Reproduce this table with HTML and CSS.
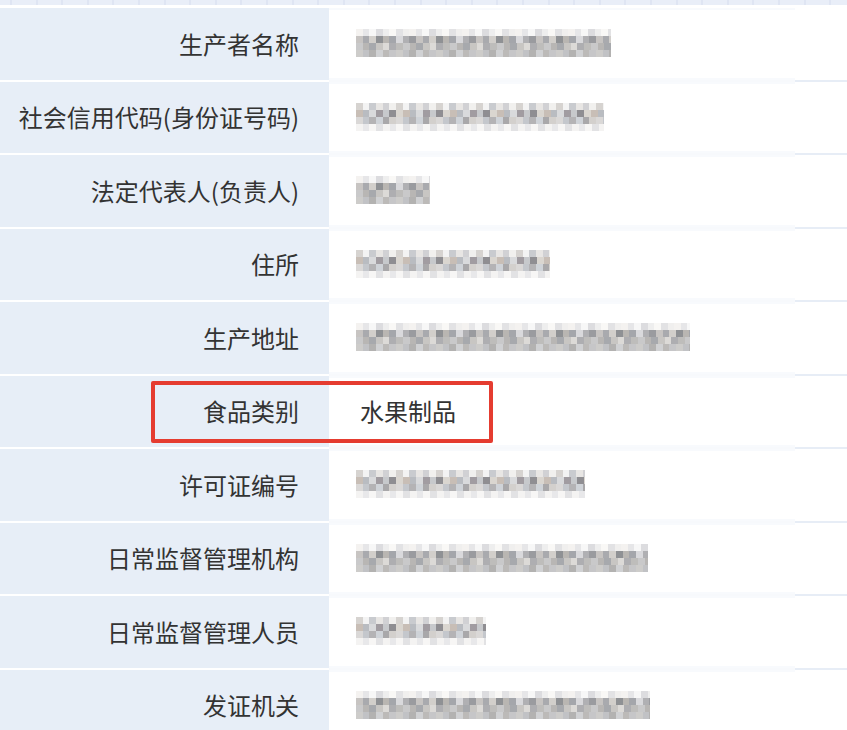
FILE: index.html
```html
<!DOCTYPE html>
<html lang="zh-CN">
<head>
<meta charset="utf-8">
<title>生产者信息</title>
<link rel="stylesheet" href="styles.css">
</head>
<body>
<div class="top-strip"></div>
<div class="info-table">
  <div class="row">
    <div class="label">生产者名称</div>
    <div class="value"><span class="mosaic" style="width:255px"></span></div>
  </div>
  <div class="row">
    <div class="label">社会信用代码(身份证号码)</div>
    <div class="value"><span class="mosaic alt" style="width:248px"></span></div>
  </div>
  <div class="row">
    <div class="label">法定代表人(负责人)</div>
    <div class="value"><span class="mosaic" style="width:74px"></span></div>
  </div>
  <div class="row">
    <div class="label">住所</div>
    <div class="value"><span class="mosaic alt" style="width:194px"></span></div>
  </div>
  <div class="row">
    <div class="label">生产地址</div>
    <div class="value"><span class="mosaic" style="width:334px"></span></div>
  </div>
  <div class="row highlight">
    <div class="label">食品类别</div>
    <div class="value"><span class="text">水果制品</span></div>
    <div class="mark"></div>
  </div>
  <div class="row">
    <div class="label">许可证编号</div>
    <div class="value"><span class="mosaic alt" style="width:229px"></span></div>
  </div>
  <div class="row">
    <div class="label">日常监督管理机构</div>
    <div class="value"><span class="mosaic" style="width:292px"></span></div>
  </div>
  <div class="row">
    <div class="label">日常监督管理人员</div>
    <div class="value"><span class="mosaic alt" style="width:130px"></span></div>
  </div>
  <div class="row">
    <div class="label">发证机关</div>
    <div class="value"><span class="mosaic" style="width:294px"></span></div>
  </div>
</div>
</body>
</html>
```

FILE: styles.css
```css
html, body {
  margin: 0;
  padding: 0;
  background: #ffffff;
}

body {
  width: 847px;
  overflow: hidden;
  font-family: "Noto Sans CJK SC", "Noto Sans", sans-serif;
  color: #333333;
}

.top-strip {
  height: 5px;
  margin-bottom: 3px;
  background:
    repeating-linear-gradient(to right, #e9eef8 0 10px, #dfe5f3 10px 12px, #e9eef8 12px 25.6px);
}

.info-table {
  display: flex;
  flex-direction: column;
  gap: 2px;
  background: linear-gradient(to right, #ffffff 0 329px, #f7f9fc 329px 795px, #e7edf6 795px);
}

.row {
  position: relative;
  display: grid;
  grid-template-columns: 329px 1fr;
  height: 71.5px;
  flex: none;
}

.label {
  display: flex;
  align-items: center;
  justify-content: flex-end;
  padding-right: 30px;
  background: #e7eef7;
  font-size: 24px;
  line-height: 1;
  white-space: nowrap;
}

.value {
  display: flex;
  align-items: center;
  padding-left: 27px;
  background:
    linear-gradient(#f8fafd, #f8fafd) left top / 466px 2px no-repeat,
    linear-gradient(#f8fafd, #f8fafd) left bottom / 466px 2px no-repeat,
    #ffffff;
}

.value .text {
  padding-left: 4px;
  font-size: 24px;
  line-height: 1;
  color: #333333;
}

/* pixelated (redacted) value: four rows of 7px blocks */
.mosaic {
  display: block;
  height: 28px;
  margin-top: -1px;
  background:
    repeating-linear-gradient(to right, #f4f2f0 0 7px, #e6e6e8 7px 13px, #f7f7f7 13px 20px, #dcdcdf 20px 27px, #eeeeee 27px 33px, #f9f8f6 33px 40px, #e2e2e4 40px 47px, #f0efee 47px 53px) 0 0 / 100% 7px no-repeat,
    repeating-linear-gradient(to right, #c7c4c2 0 7px, #a9aaae 7px 13px, #d2cfcb 13px 20px, #8f9194 20px 27px, #b9b6b2 27px 33px, #a4a6ab 33px 40px, #d9d9dc 40px 47px, #b0b0b3 47px 53px, #9a9b9f 53px 60px) 0 7px / 100% 7px no-repeat,
    repeating-linear-gradient(to right, #c9c9ca 0 7px, #b8b6b4 7px 13px, #a7a9ad 13px 20px, #c8c6c3 20px 27px, #dcdad7 27px 33px, #aeaeb1 33px 40px, #bebdbb 40px 47px) 0 14px / 100% 7px no-repeat,
    repeating-linear-gradient(to right, #cdccca 0 7px, #c1c2c5 7px 13px, #b3b2b1 13px 20px, #d0d1d3 20px 27px, #bcbab8 27px 33px, #c6c6c8 33px 40px) 0 21px / 100% 7px no-repeat;
}

.mosaic.alt {
  background:
    repeating-linear-gradient(to right, #d6d3d0 0 7px, #f3f3f3 7px 13px, #c9cbcf 13px 20px, #e8e6e4 20px 27px, #d1d1d4 27px 33px, #f1f0ee 33px 40px) 0 0 / 100% 7px no-repeat,
    repeating-linear-gradient(to right, #c8beb6 0 7px, #b9bcc1 7px 13px, #d9dadc 13px 20px, #a19ca1 20px 27px, #c7c9cc 27px 33px, #8f8e92 33px 40px, #dad6d0 40px 47px) 0 7px / 100% 7px no-repeat,
    repeating-linear-gradient(to right, #dad8d7 0 7px, #c4c7cc 7px 13px, #b4b3b5 13px 20px, #cfd3d8 20px 27px, #a9a8aa 27px 33px, #d3d0cd 33px 40px) 0 14px / 100% 7px no-repeat,
    repeating-linear-gradient(to right, #f4f3f2 0 7px, #e8e8ea 7px 13px, #f7f6f5 13px 20px, #e2e2e4 20px 27px) 0 21px / 100% 7px no-repeat;
}

.mark {
  position: absolute;
  left: 151px;
  top: 5px;
  width: 342px;
  height: 62px;
  box-sizing: border-box;
  border: 4.5px solid #e53c30;
  border-radius: 2px;
  pointer-events: none;
}
```
